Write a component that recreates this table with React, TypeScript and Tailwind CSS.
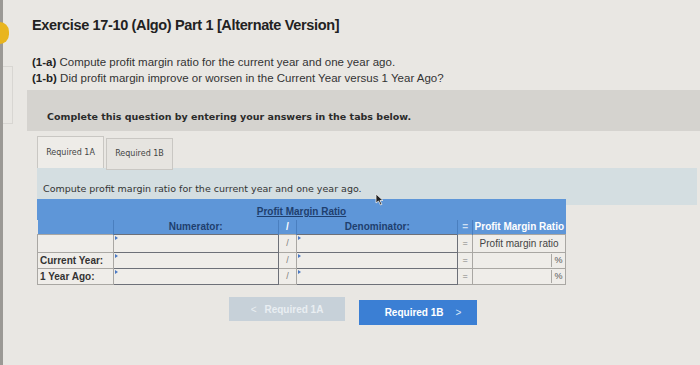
import type { ReactNode } from 'react';

// Column widths for the profit margin ratio worksheet.
const COLS = [76, 165, 19, 161, 15, 93];

function InputCell() {
  return (
    <td className="relative border border-[#6d7078] bg-[#efede9] p-0">
      <span className="absolute left-[1px] top-[1px] h-0 w-0 border-y-[2px] border-l-[3px] border-y-transparent border-l-[#4a78c2]" />
    </td>
  );
}

function OpCell({ children }: { children: ReactNode }) {
  return (
    <td className="border border-[#a9a7a3] bg-[#efede9] text-center text-[9px] leading-none text-[#7c7c7c]">
      {children}
    </td>
  );
}

function RatioCell() {
  return (
    <td className="border border-[#a9a7a3] bg-[#efede9] p-0">
      <div className="flex h-full">
        <div className="flex-1" />
        <div className="flex w-[14px] items-center justify-center border-l border-[#a9a7a3] text-[9px] text-[#555]">%</div>
      </div>
    </td>
  );
}

function DataRow({ label }: { label: string }) {
  return (
    <tr className="h-[16px]">
      <td className="border border-[#a9a7a3] bg-[#efede9] pl-[2px] text-[10px] font-bold text-[#333]">{label}</td>
      <InputCell />
      <OpCell>/</OpCell>
      <InputCell />
      <OpCell>=</OpCell>
      <RatioCell />
    </tr>
  );
}

export default function App() {
  return (
    <div className="relative flex h-[365px] w-[700px] overflow-hidden bg-[#e9e7e3] font-['Liberation_Sans',Arial,sans-serif] text-[#222]">
      {/* screen edge and the side bubble */}
      <div className="w-[3px] bg-[#9b9995]" />
      <div className="absolute left-[-10px] top-[22px] h-[22px] w-[19px] rounded-full bg-[#e9b51f]" />
      <div className="absolute left-[3px] top-[66px] h-[58px] w-[10px] border-y border-r border-[#d8d6d2]" />

      <main className="flex flex-1 flex-col pl-[29px] pt-[15px]">
        <h1 className="text-[14.5px] font-bold leading-[20px] tracking-[-0.35px] text-[#222]">
          Exercise 17-10 (Algo) Part 1 [Alternate Version]
        </h1>

        <div className="mt-[19px] text-[11.5px] leading-[16px] text-[#333]">
          <p><b className="text-[#222]">(1-a)</b> Compute profit margin ratio for the current year and one year ago.</p>
          <p><b className="text-[#222]">(1-b)</b> Did profit margin improve or worsen in the Current Year versus 1 Year Ago?</p>
        </div>

        <div className="-ml-[5px] mt-[4px] flex h-[41px] items-center bg-[#d5d3cf] pl-[20px] pt-[14px] font-['DejaVu_Sans',Verdana,sans-serif] text-[9.5px] font-bold text-[#2b2b2b]">
          Complete this question by entering your answers in the tabs below.
        </div>

        <div className="ml-[5px] mr-[3px] mt-[5px] font-['DejaVu_Sans',Verdana,sans-serif]">
          <div className="flex items-end gap-[2px]">
            <div className="flex h-[32px] w-[67px] items-center justify-center border border-b-0 border-[#c9c7c3] bg-[#eeece8] text-[8px] text-[#444]">
              Required 1A
            </div>
            <div className="mb-[-2px] flex h-[32px] w-[67px] items-center justify-center border border-[#c9c7c3] bg-[#e6e4e0] text-[8px] text-[#444]">
              Required 1B
            </div>
          </div>

          <div className="h-[37px] bg-[#d4dee1] pl-[6px] pt-[14px] text-[9.5px] text-[#333]">
            Compute profit margin ratio for the current year and one year ago.
          </div>

          <table className="-mt-[6px] border-collapse font-['Liberation_Sans',Arial,sans-serif]" style={{ width: COLS.reduce((a, b) => a + b, 0) }}>
            <colgroup>
              {COLS.map((w, i) => (
                <col key={i} style={{ width: w }} />
              ))}
            </colgroup>
            <tbody>
              <tr className="h-[19px] bg-[#5e96d8]">
                <td colSpan={6} className="border border-[#5e96d8] pt-[4px] text-center text-[10px] font-bold text-[#1f3f6e] underline">
                  Profit Margin Ratio
                </td>
              </tr>
              <tr className="h-[15px] bg-[#5e96d8] text-[10px] font-bold leading-none">
                <td className="border-r border-[#4a7fbf]" />
                <td className="border-x border-[#4a7fbf] text-center text-[#1f3f6e]">Numerator:</td>
                <td className="border-x border-[#4a7fbf] text-center text-white">/</td>
                <td className="border-x border-[#4a7fbf] text-center text-[#1f3f6e]">Denominator:</td>
                <td className="border-x border-[#4a7fbf] text-center text-[#cfe0f4]">=</td>
                <td className="border-l border-[#4a7fbf] text-center text-white">Profit Margin Ratio</td>
              </tr>
              <tr className="h-[18px]">
                <td className="border border-[#a9a7a3] bg-[#efede9]" />
                <InputCell />
                <OpCell>/</OpCell>
                <InputCell />
                <OpCell>=</OpCell>
                <td className="border border-[#a9a7a3] bg-[#efede9] text-center text-[10px] text-[#444]">Profit margin ratio</td>
              </tr>
              <DataRow label="Current Year:" />
              <DataRow label="1 Year Ago:" />
            </tbody>
          </table>

          <div className="ml-[192px] mt-[12px] flex gap-[14px] font-['Liberation_Sans',Arial,sans-serif] text-[10px] font-bold">
            <button className="flex h-[24px] w-[116px] items-center justify-center gap-[8px] bg-[#c7d1d9] text-[#e9eef2]">
              <span className="font-normal">&lt;</span> Required 1A
            </button>
            <button className="mt-[3px] flex h-[25px] w-[118px] items-center justify-center gap-[12px] bg-[#3b7fd4] pl-[10px] text-white">
              Required 1B <span className="font-normal text-[#dce8f7]">&gt;</span>
            </button>
          </div>
        </div>
      </main>

      {/* mouse pointer */}
      <svg className="absolute left-[375px] top-[193px]" width="9" height="13" viewBox="0 0 9 13">
        <path d="M1 1 L1 10 L3.5 8 L5.5 12 L7 11.3 L5 7.5 L8 7.5 Z" fill="#222" stroke="#eee" strokeWidth="0.8" />
      </svg>
    </div>
  );
}
